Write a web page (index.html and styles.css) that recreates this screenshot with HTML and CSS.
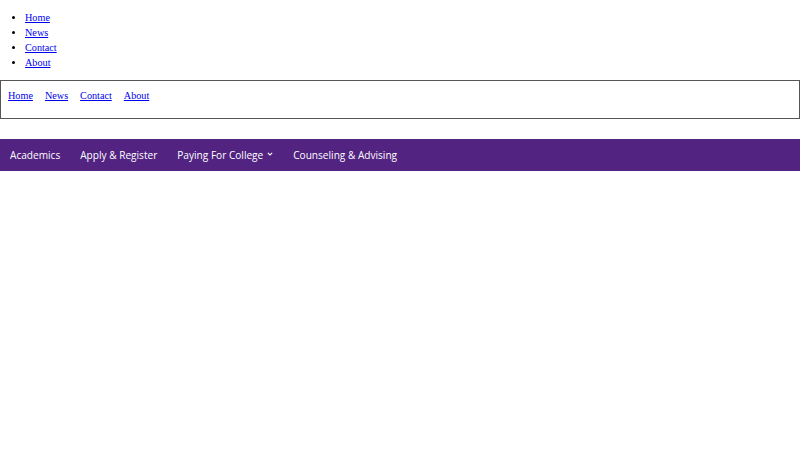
FILE: index.html
```html
<!DOCTYPE html>
<html>
<head>
<meta charset="utf-8">
<link rel="stylesheet" href="styles.css">
</head>
<body>
<ul class="list">
  <li><a href="#">Home</a></li>
  <li><a href="#">News</a></li>
  <li><a href="#">Contact</a></li>
  <li><a href="#">About</a></li>
</ul>
<nav class="boxnav">
  <a href="#">Home</a>
  <a href="#">News</a>
  <a href="#">Contact</a>
  <a href="#">About</a>
</nav>
<nav class="mainnav">
  <a class="item" href="#">Academics</a>
  <a class="item" href="#">Apply &amp; Register</a>
  <a class="item" href="#">Paying For College <svg class="caret" width="6" height="4" viewBox="0 0 6 4"><path d="M0.8 0.8 L3 3 L5.2 0.8" fill="none" stroke="#fff" stroke-width="1.1"/></svg></a>
  <a class="item" href="#">Counseling &amp; Advising</a>
</nav>
</body>
</html>
```
FILE: styles.css
```css
html, body {
  margin: 0;
  padding: 0;
  background: #fff;
}
body {
  font-family: "Liberation Serif", "Times New Roman", serif;
  font-size: 10.2px;
  line-height: 15px;
  color: #000;
}
a {
  color: #0000ee;
}
.list {
  margin: 0;
  padding: 10px 0 0 25px;
  list-style: disc;
}
.boxnav {
  margin-top: 10px;
  border: 1px solid #555;
  padding: 7px 7px 15px 7px;
  display: flex;
  gap: 12px;
}
.mainnav {
  margin-top: 20px;
  background: #522381;
  height: 32px;
  display: flex;
  align-items: center;
  padding-left: 10px;
  gap: 20px;
  font-family: "Open Sans", sans-serif;
  font-size: 10.1px;
}
.mainnav .item {
  color: #fff;
  text-decoration: none;
  display: flex;
  align-items: center;
  gap: 4px;
}
.caret {
  margin-top: -2px;
}
```
